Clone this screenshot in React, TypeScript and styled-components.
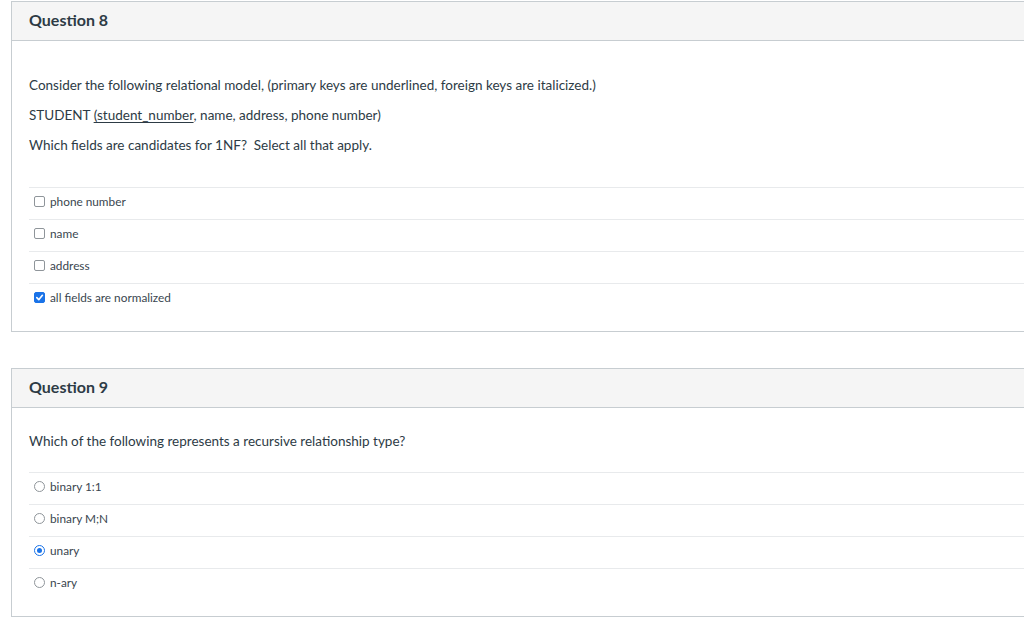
import styled, { createGlobalStyle } from "styled-components";

const GlobalStyle = createGlobalStyle`
  html, body {
    margin: 0;
    padding: 0;
    background: #ffffff;
    overflow: hidden;
  }
  body {
    font-family: Lato, "Liberation Sans", sans-serif;
    color: #2d3b45;
  }
`;

const Page = styled.main`
  display: flex;
  flex-direction: column;
  gap: 36px;
  padding: 1px 0 0 11px;
  width: 1030px;
`;

const Card = styled.section`
  border: 1px solid #c7cdd1;
  border-right: none;
  background: #ffffff;
`;

const CardHeader = styled.header`
  display: flex;
  align-items: center;
  box-sizing: border-box;
  height: 39px;
  padding: 0 17px 4px;
  background: #f5f5f5;
  border-bottom: 1px solid #c7cdd1;
`;

const CardTitle = styled.h2`
  margin: 0;
  font-size: 16px;
  font-weight: 700;
  color: #2d3b45;
`;

const CardBody = styled.div<{ $top: number; $gap: number }>`
  padding: ${(p) => p.$top}px 0 16px 17px;

  & > ul {
    margin-top: ${(p) => p.$gap}px;
  }
`;

const Prompt = styled.p`
  margin: 0 0 12px;
  font-size: 13.5px;
  line-height: 18px;
  color: #2d3b45;
`;

const Key = styled.span`
  text-decoration: underline;
  text-underline-offset: 2px;
`;

const Answers = styled.ul`
  list-style: none;
  margin: 0;
  padding: 0;
`;

const Answer = styled.li`
  display: flex;
  align-items: center;
  gap: 5px;
  box-sizing: border-box;
  height: 32px;
  padding: 0 0 4px 5px;
  border-top: 1px solid #e8eaec;
  font-size: 11.8px;
  color: #3a464f;
`;

const Box = styled.span<{ $checked?: boolean }>`
  display: inline-flex;
  align-items: center;
  justify-content: center;
  box-sizing: border-box;
  width: 11px;
  height: 11px;
  border-radius: 2px;
  border: 1px solid ${(p) => (p.$checked ? "#1a73e8" : "#8f959a")};
  background: ${(p) => (p.$checked ? "#1a73e8" : "#ffffff")};
`;

const Radio = styled.span<{ $checked?: boolean }>`
  display: inline-flex;
  align-items: center;
  justify-content: center;
  box-sizing: border-box;
  width: 11px;
  height: 11px;
  border-radius: 50%;
  border: 1px solid ${(p) => (p.$checked ? "#1a73e8" : "#8f959a")};
  background: #ffffff;

  &::after {
    content: "";
    display: ${(p) => (p.$checked ? "block" : "none")};
    width: 5px;
    height: 5px;
    border-radius: 50%;
    background: #1a73e8;
  }
`;

const Check = () => (
  <svg width="9" height="9" viewBox="0 0 10 10">
    <path d="M2 5.2 L4.2 7.4 L8.2 2.6" fill="none" stroke="#fff" strokeWidth="1.8" strokeLinecap="round" strokeLinejoin="round" />
  </svg>
);

const q8 = [
  { label: "phone number", checked: false },
  { label: "name", checked: false },
  { label: "address", checked: false },
  { label: "all fields are normalized", checked: true },
];

const q9 = [
  { label: "binary 1:1", checked: false },
  { label: "binary M;N", checked: false },
  { label: "unary", checked: true },
  { label: "n-ary", checked: false },
];

export default function App() {
  return (
    <>
      <GlobalStyle />
      <Page>
        <Card>
          <CardHeader>
            <CardTitle>Question 8</CardTitle>
          </CardHeader>
          <CardBody $top={35} $gap={33}>
            <Prompt>
              Consider the following relational model, (primary keys are underlined, foreign keys are italicized.)
            </Prompt>
            <Prompt>
              STUDENT <Key>(student_number</Key>, name, address, phone number)
            </Prompt>
            <Prompt>Which fields are candidates for 1NF?&nbsp; Select all that apply.</Prompt>
            <Answers>
              {q8.map((a) => (
                <Answer key={a.label}>
                  <Box $checked={a.checked}>{a.checked && <Check />}</Box>
                  {a.label}
                </Answer>
              ))}
            </Answers>
          </CardBody>
        </Card>
        <Card>
          <CardHeader>
            <CardTitle>Question 9</CardTitle>
          </CardHeader>
          <CardBody $top={24} $gap={22}>
            <Prompt>Which of the following represents a recursive relationship type?</Prompt>
            <Answers>
              {q9.map((a) => (
                <Answer key={a.label}>
                  <Radio $checked={a.checked} />
                  {a.label}
                </Answer>
              ))}
            </Answers>
          </CardBody>
        </Card>
      </Page>
    </>
  );
}
